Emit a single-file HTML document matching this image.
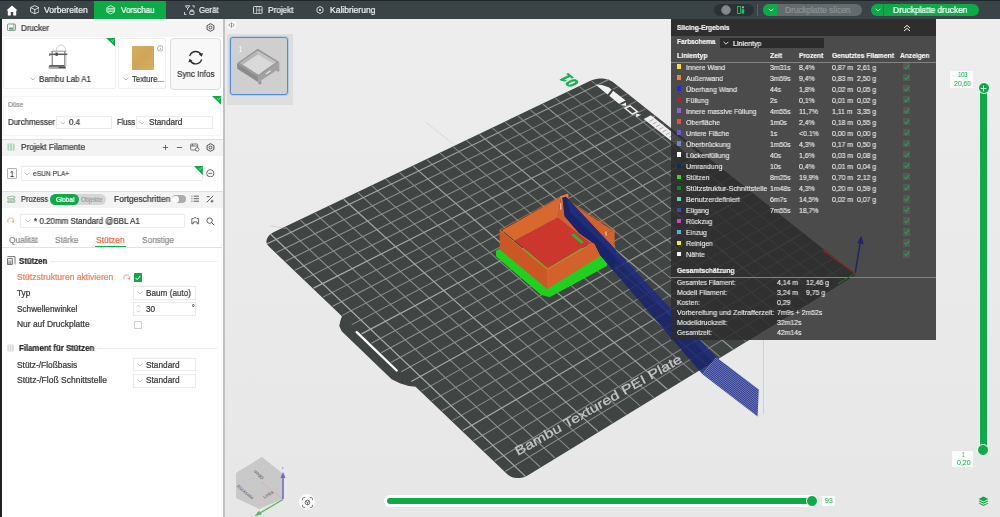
<!DOCTYPE html>
<html><head><meta charset="utf-8"><title>Bambu Studio</title>
<style>
*{box-sizing:border-box;margin:0;padding:0}
html,body{width:1000px;height:517px;overflow:hidden;background:#eaeaea;font-family:"Liberation Sans",sans-serif}
#app{position:relative;width:1000px;height:517px;overflow:hidden;background:linear-gradient(#ededed,#e7e7e7)}
.abs,.t,.sq,.ck,.box{position:absolute}
.t{white-space:pre;transform-origin:left center;letter-spacing:0;will-change:transform;-webkit-text-stroke:.22px currentColor}
.box{border:1px solid #ebebeb;background:#fff}
.sq{left:676.9px;width:4.6px;height:4.6px}
.ck{left:902.6px;width:7.6px;height:7.6px;background:rgba(95,100,96,.55)}
.ck svg{position:absolute;left:0;top:0;width:7.6px;height:7.6px}
svg{display:block}
</style></head><body>
<div id="app">

<!-- ===== 3D canvas ===== -->
<svg class="abs" style="left:0;top:0;filter:blur(.35px)" width="1000" height="517" viewBox="0 0 1000 517">
<defs><linearGradient id="g1" gradientUnits="userSpaceOnUse" x1="330" y1="420" x2="780" y2="140"><stop offset="0" stop-color="#909492"/><stop offset="1" stop-color="#747876"/></linearGradient><linearGradient id="g2" gradientUnits="userSpaceOnUse" x1="330" y1="420" x2="780" y2="140"><stop offset="0" stop-color="#adb0ae"/><stop offset="1" stop-color="#888c8a"/></linearGradient></defs>
<polygon points="854.9,274.0 855.1,274.1 855.3,274.3 855.3,274.5 855.3,274.8 855.3,275.0 855.2,275.2 855.0,275.4 854.8,275.5 528.0,475.3 525.5,476.5 522.8,477.4 519.9,477.9 517.0,478.0 514.2,477.7 511.6,476.9 509.2,475.8 507.3,474.3 415.6,386.7 408.8,385.9 400.4,383.6 391.6,379.3 341.7,331.3 339.3,326.1 340.2,321.4 341.9,316.2 268.7,246.3 267.4,244.7 266.6,242.8 266.4,240.9 266.9,238.9 267.9,236.9 269.5,235.1 271.5,233.5 274.0,232.0 590.4,80.7 593.2,79.7 596.2,79.0 599.4,78.6 602.6,78.6 605.7,79.1 608.7,79.9 611.3,81.0 613.5,82.4" fill="#404443"/>
<path d="M843.2,281.9 L591.5,80.8 M844.3,266.3 L505.4,471.3 M831.5,289.0 L579.5,86.6 M833.7,258.0 L494.6,461.0 M819.6,296.3 L567.4,92.3 M823.3,249.6 L483.9,450.8 M807.6,303.6 L555.2,98.2 M812.9,241.4 L473.3,440.7 M783.2,318.5 L530.4,110.0 M792.3,225.0 L452.3,420.6 M770.8,326.1 L517.9,116.0 M782.1,216.9 L442.0,410.7 M758.4,333.7 L505.2,122.1 M771.9,208.9 L431.7,400.9 M745.7,341.4 L492.5,128.2 M761.8,200.9 L421.4,391.1 M720.1,357.0 L466.6,140.6 M741.9,185.1 L401.2,371.8 M707.1,365.0 L453.4,146.9 M732.0,177.2 L391.2,362.2 M694.0,373.0 L440.2,153.2 M722.2,169.4 L381.2,352.7 M680.7,381.1 L426.8,159.6 M712.4,161.7 L371.4,343.3 M653.8,397.6 L399.6,172.6 M693.0,146.3 L351.8,324.6 M640.1,405.9 L385.8,179.2 M683.4,138.7 L342.2,315.4 M626.3,414.4 L371.9,185.8 M673.9,131.1 L332.6,306.2 M612.3,422.9 L357.9,192.6 M664.4,123.6 L323.0,297.1 M583.9,440.3 L329.4,206.2 M645.7,108.7 L304.1,279.1 M569.5,449.1 L315.0,213.1 M636.4,101.3 L294.8,270.2 M554.9,458.0 L300.4,220.1 M627.1,94.0 L285.5,261.3 M540.1,467.0 L285.6,227.1 M617.9,86.7 L276.3,252.5" stroke="url(#g1)" stroke-width="1.05" fill="none"/>
<path d="M795.5,311.0 L542.9,104.1 M802.5,233.2 L462.8,430.6 M733.0,349.2 L479.6,134.4 M751.8,193.0 L411.3,381.4 M667.3,389.3 L413.3,166.1 M702.7,154.0 L361.6,333.9 M598.2,431.6 L343.7,199.3 M655.0,116.1 L313.5,288.1 M525.2,476.1 L270.7,234.3 M608.8,79.5 L267.2,243.8" stroke="url(#g2)" stroke-width="1.2" fill="none"/>
<line x1="396.7" y1="370.5" x2="356.7" y2="332.2" stroke="#fff" stroke-width="2.4" stroke-linecap="round"/>
<text transform="matrix(1.2802 -0.7316 0.5853 1.1315 517.80 456.06)" font-family="Liberation Sans, sans-serif" font-size="10" textLength="129" lengthAdjust="spacingAndGlyphs" fill="#c4c6c5" stroke="#c4c6c5" stroke-width=".2">Bambu Textured PEI Plate</text>
<text transform="matrix(-0.9062 -0.7270 1.2021 -0.5735 579.99 82.95)" font-family="Liberation Sans, sans-serif" font-weight="700" font-size="12" fill="#10b04c" stroke="#10b04c" stroke-width=".5">01</text>
<polygon points="595.7,84.8 601.9,85.1 608.6,87.2 625.6,100.4 619.0,103.7" fill="#f1f1f1"/>
<polygon points="612.2,88.8 607.1,95.2 608.8,96.5 613.8,90.1" fill="#404443"/>
<polygon points="625.9,102.5 620.9,104.9 626.2,105.9" fill="#f1f1f1"/>
<polygon points="630.1,104.9 623.7,108.1 632.3,114.9 638.7,111.7" fill="#f1f1f1"/>
<polygon points="630.0,106.7 626.4,108.4 632.4,113.2 635.9,111.4" fill="#404443"/>
<polygon points="641.3,114.8 636.3,117.3 636.0,113.8" fill="#f1f1f1"/>
<polygon points="650.9,115.3 643.7,118.9 693.6,158.8 700.8,154.9" fill="#eeeeee"/>
<line x1="653.4" y1="119.4" x2="649.5" y2="121.4" stroke="#777" stroke-width=".6"/>
<line x1="656.7" y1="122.0" x2="652.8" y2="124.0" stroke="#777" stroke-width=".6"/>
<line x1="660.0" y1="124.7" x2="656.1" y2="126.6" stroke="#777" stroke-width=".6"/>
<line x1="663.3" y1="127.3" x2="659.4" y2="129.3" stroke="#777" stroke-width=".6"/>
<line x1="666.6" y1="129.9" x2="662.7" y2="131.9" stroke="#777" stroke-width=".6"/>
<line x1="669.9" y1="132.6" x2="666.0" y2="134.6" stroke="#777" stroke-width=".6"/>
<line x1="673.2" y1="135.2" x2="669.3" y2="137.2" stroke="#777" stroke-width=".6"/>
<line x1="676.6" y1="137.9" x2="672.7" y2="139.9" stroke="#777" stroke-width=".6"/>
<line x1="679.9" y1="140.5" x2="676.0" y2="142.5" stroke="#777" stroke-width=".6"/>
<line x1="683.3" y1="143.2" x2="679.4" y2="145.2" stroke="#777" stroke-width=".6"/>
<line x1="686.6" y1="145.9" x2="682.7" y2="147.9" stroke="#777" stroke-width=".6"/>
<line x1="690.0" y1="148.5" x2="686.1" y2="150.6" stroke="#777" stroke-width=".6"/>
<line x1="693.4" y1="151.2" x2="689.5" y2="153.3" stroke="#777" stroke-width=".6"/>
<defs>
<pattern id="hb" width="1.6" height="1.6" patternUnits="userSpaceOnUse" patternTransform="rotate(38)"><rect width="1.6" height="1.6" fill="#2e3a8e"/><rect width="1.6" height=".55" fill="#8e97cf"/></pattern>
<pattern id="hr" width="1.5" height="1.5" patternUnits="userSpaceOnUse" patternTransform="rotate(-27)"><rect width="1.5" height="1.5" fill="#d43a30"/><rect width="1.5" height=".5" fill="#bd2f28"/></pattern>
<pattern id="ho" width="1.5" height="1.5" patternUnits="userSpaceOnUse" patternTransform="rotate(62)"><rect width="1.5" height="1.5" fill="#da682e"/><rect width="1.5" height=".5" fill="#c45624"/></pattern>
</defs>
<line x1="425.6" y1="122" x2="452.6" y2="143.6" stroke="#b8b8b8" stroke-width=".5" stroke-dasharray="2 1"/>
<line x1="270.5" y1="225.8" x2="286" y2="228.5" stroke="#bdbdbd" stroke-width=".5"/>
<line x1="763.5" y1="338" x2="763.5" y2="414" stroke="#c0c0c0" stroke-width=".6"/>
<polygon points="495.8,250.8 499.7,248.7 549.6,249.6 615.7,246.1 606.5,266.3 549.6,297.2 540.8,294.8 496.2,256.6" fill="#1fd01f"/>
<polygon points="499.7,229.9 547.3,269.3 547.3,289.0 499.7,249.6" fill="#cb5824"/>
<polygon points="547.3,269.3 614.6,229.9 614.6,247.3 547.3,289.0" fill="url(#ho)"/>
<polygon points="502.0,230.3 561.2,196.7 557.7,217.6 514.8,240.8" fill="#d8682e"/>
<polygon points="561.2,196.7 612.7,230.3 589.5,243.8 557.7,217.6" fill="#d2622b"/>
<polygon points="514.8,240.8 557.7,217.6 590.2,243.1 547.7,268.2" fill="url(#hr)"/>
<polyline points="499.7,229.9 547.3,269.3 614.6,229.9" fill="none" stroke="#e67a40" stroke-width=".8"/>
<polyline points="499.7,229.9 561.2,196.2 614.6,229.9" fill="none" stroke="#e0733a" stroke-width=".7"/>
<polygon points="571.0,234.8 574.0,233.4 583.9,242.2 581.2,243.8" fill="#26b82a"/>
<polygon points="560.0,196.2 568.2,193.5 568.6,197.4 561.7,203.2" fill="#e87a44"/>
<rect x="560.3" y="203.2" width="1" height="6.5" fill="#f4d9c8"/>
<rect x="605.5" y="231.5" width="1" height="4" fill="#f4d9c8"/>
<polygon points="562.4,197.8 566.0,196.8 716.0,357.0 702.5,374.3 600.4,255.5 594.7,244.0 579.0,232.9 564.6,216.2" fill="#17226e" fill-opacity=".84"/>
<polygon points="562.4,197.8 566.0,196.8 616.0,250.2 614.0,271.3 600.4,255.5 594.7,244.0 579.0,232.9 564.6,216.2" fill="#1a246a"/>
<polygon points="566.0,196.8 716.0,357.0 712.0,361.5 600.0,241.0 570.0,212.0" fill="#3146a8" fill-opacity=".28"/>
<polygon points="716.0,357.0 758.8,389.5 757.6,416.5 702.5,374.3" fill="url(#hb)"/>
</svg>

<!-- thumbnail strip -->
<div class="abs" style="left:226.5px;top:33.5px;width:66px;height:71.5px;background:#dedede"></div>
<div class="abs" style="left:229.5px;top:36.5px;width:58.5px;height:58.5px;background:#cfcfcf;border:1px solid #4a90e2;border-radius:3px;box-shadow:0 0 0 1px rgba(120,170,230,.35)"></div>
<svg class="abs" style="left:229.5px;top:36.5px" width="59" height="59" viewBox="0 0 59 59">
 <polygon points="7.2,25.9 28.4,40 28.4,45.3 7.2,31.7" fill="#8b8b8b"/>
 <polygon points="28.4,40 49.3,25 49.3,31.6 28.4,45.3" fill="#a2a2a2"/>
 <polygon points="28.4,45 28.4,47.3 31.4,47.3 31.4,43.4" fill="#979797"/>
 <polygon points="47.2,32.6 49.3,31.4 49.3,33.9 47.2,35" fill="#979797"/>
 <polygon points="7.2,25.9 27.7,11.8 49.3,25 28.4,40" fill="#979797"/>
 <polygon points="10.2,25.9 27.7,13.9 46.2,25 28.4,37.8" fill="#d9d9d9"/>
 <polygon points="10.2,25.9 27.7,13.9 27.7,17.4 12.9,27.6" fill="#b4b4b4"/>
 <polygon points="27.7,13.9 46.2,25 43.8,26.7 27.7,17.4" fill="#c2c2c2"/>
 <line x1="36" y1="37" x2="40.6" y2="33.8" stroke="#e6e6e6" stroke-width="1.2"/>
</svg>
<div class="abs" style="left:226.6px;top:20.8px;width:9px;height:8px;background:#f6f6f6;border-radius:1px"></div>
<svg class="abs" style="left:227.6px;top:21.8px" width="7" height="6" viewBox="0 0 7 6"><path d="M3.5 0.3V5.7M2.3 1.3 0.8 3 2.3 4.7M4.7 1.3 6.2 3 4.7 4.7" stroke="#555" stroke-width=".6" fill="none"/></svg>

<!-- nav cube -->
<svg class="abs" style="left:230px;top:452px" width="62" height="65" viewBox="230 452 62 65">
 <polygon points="262,457 282,473 283,499 259,509 236,498 236,473" fill="#c6c6c6" opacity=".92"/>
 <line x1="283" y1="499" x2="283" y2="476" stroke="#7468c6" stroke-width="1.6"/>
 <polygon points="283,472 285.6,478 280.4,478" fill="#7468c6"/>
 <line x1="283" y1="499.5" x2="260" y2="513" stroke="#5dba63" stroke-width="1.4"/>
 <polygon points="254.5,516 259,510.8 262,514.6" fill="#5dba63"/>
 <line x1="261" y1="482" x2="282" y2="498.5" stroke="#e0a8a8" stroke-width=".7"/>
 <g font-family="Liberation Sans, sans-serif" font-size="4.2" fill="#555">
  <text transform="translate(264,477.6) rotate(222)" font-size="4.8">Oben</text>
  <text transform="translate(236.6,486.8) rotate(40)" font-size="4.6">Rückseite</text>
  <text transform="translate(264.6,498.8) rotate(-33)" font-size="4.6">Links</text>
  <text x="281.8" y="468.5" fill="#7468c6" font-size="3.6">z</text>
 </g>
</svg>
<!-- camera btn -->
<div class="abs" style="left:299px;top:494px;width:16px;height:16px;border-radius:8px;background:#fbfbfb"></div>
<svg class="abs" style="left:301.5px;top:496.5px" width="11" height="11" viewBox="0 0 11 11"><g fill="none" stroke="#555" stroke-width=".8"><path d="M0.6 3.2V1.6Q.6.6 1.6.6H3.2M7.8.6H9.4Q10.4.6 10.4 1.6V3.2M10.4 7.8V9.4Q10.4 10.4 9.4 10.4H7.8M3.2 10.4H1.6Q.6 10.4.6 9.4V7.8"/><circle cx="5.5" cy="5.5" r="2.3"/><path d="M5.5 5.5V7.8M5.5 5.5 3.6 4.3M5.5 5.5 7.4 4.3"/></g></svg>

<!-- horizontal slider -->
<div class="abs" style="left:384px;top:495.3px;width:433px;height:11.4px;border-radius:6px;background:#fff"></div>
<div class="abs" style="left:387px;top:498px;width:427px;height:6px;border-radius:3px;background:#0dab47"></div>
<div class="abs" style="left:805.6px;top:495px;width:12px;height:12px;border-radius:6px;background:#0dab47;border:1px solid #f4fff8"></div>
<div class="abs" style="left:822px;top:496px;width:13px;height:10px;background:#fbfbfb"></div>
<!-- vertical slider -->
<div class="abs" style="left:978.6px;top:84px;width:10px;height:370px;border-radius:5px;background:#fff"></div>
<div class="abs" style="left:980.3px;top:86px;width:6.6px;height:366px;background:#0dab47"></div>
<div class="abs" style="left:977.6px;top:82.3px;width:12px;height:12px;border-radius:6px;background:#0dab47;border:1px solid #fbfffc"></div>
<svg class="abs" style="left:980.1px;top:84.8px" width="7" height="7" viewBox="0 0 7 7"><path d="M3.5 .6V6.4M.6 3.5H6.4" stroke="#dfffe9" stroke-width=".9"/></svg>
<div class="abs" style="left:977.4px;top:443.7px;width:12px;height:12px;border-radius:6px;background:#0dab47;border:1px solid #fbfffc"></div>
<div class="abs" style="left:950.2px;top:70.5px;width:23.2px;height:17px;background:#fbfbfb"></div>
<div class="abs" style="left:952px;top:450.6px;width:21.4px;height:16.6px;background:#fbfbfb"></div>
<svg class="abs" style="left:978px;top:496px" width="11" height="11" viewBox="0 0 11 11"><g fill="#0dab47"><path d="M5.5 .4 10.4 2.9 5.5 5.4 .6 2.9Z"/><path d="M1.7 4.6.6 5.2 5.5 7.7 10.4 5.2 9.3 4.6 5.5 6.5Z"/><path d="M1.7 6.9.6 7.5 5.5 10 10.4 7.5 9.3 6.9 5.5 8.8Z"/></g></svg>

<!-- ===== slicing panel ===== -->
<div class="abs" style="left:670.5px;top:19px;width:265.5px;height:321px;background:rgba(44,44,44,.84)"></div>
<div class="abs" style="left:670.5px;top:19px;width:265.5px;height:16.5px;background:rgba(36,36,36,.75)"></div>
<div class="abs" style="left:720.2px;top:38.2px;width:103.6px;height:10.2px;background:rgba(30,30,30,.7)"></div>
<svg class="abs" style="left:722.6px;top:41.4px" width="6" height="4" viewBox="0 0 6 4"><path d="M.6.8 3 3.2 5.4.8" stroke="#f0f0f0" stroke-width=".9" fill="none"/></svg>
<div class="abs" style="left:670.5px;top:61.5px;width:265.5px;height:1px;background:#838383"></div>
<div class="abs" style="left:670.5px;top:276.6px;width:265.5px;height:1px;background:#838383"></div>
<svg class="abs" style="left:902.5px;top:24px" width="8" height="8" viewBox="0 0 8 8"><path d="M1 4 4 1.4 7 4M1 7 4 4.4 7 7" stroke="#f2f2f2" stroke-width="1" fill="none"/></svg>
<i class="sq" style="top:64.2px;background:#f5e03c"></i>
<i class="ck" style="top:62.6px"><svg viewBox="0 0 8 8"><path d="M1.6 4.2 3.3 5.9 6.6 2" stroke="#1fa04e" stroke-width="1.3" fill="none"/></svg></i>
<i class="sq" style="top:75.2px;background:#f58231"></i>
<i class="ck" style="top:73.6px"><svg viewBox="0 0 8 8"><path d="M1.6 4.2 3.3 5.9 6.6 2" stroke="#1fa04e" stroke-width="1.3" fill="none"/></svg></i>
<i class="sq" style="top:86.3px;background:#1f2bd6"></i>
<i class="ck" style="top:84.7px"><svg viewBox="0 0 8 8"><path d="M1.6 4.2 3.3 5.9 6.6 2" stroke="#1fa04e" stroke-width="1.3" fill="none"/></svg></i>
<i class="sq" style="top:97.3px;background:#b0281f"></i>
<i class="ck" style="top:95.7px"><svg viewBox="0 0 8 8"><path d="M1.6 4.2 3.3 5.9 6.6 2" stroke="#1fa04e" stroke-width="1.3" fill="none"/></svg></i>
<i class="sq" style="top:108.3px;background:#8f63c9"></i>
<i class="ck" style="top:106.7px"><svg viewBox="0 0 8 8"><path d="M1.6 4.2 3.3 5.9 6.6 2" stroke="#1fa04e" stroke-width="1.3" fill="none"/></svg></i>
<i class="sq" style="top:119.4px;background:#f04a44"></i>
<i class="ck" style="top:117.8px"><svg viewBox="0 0 8 8"><path d="M1.6 4.2 3.3 5.9 6.6 2" stroke="#1fa04e" stroke-width="1.3" fill="none"/></svg></i>
<i class="sq" style="top:130.4px;background:#6a5acd"></i>
<i class="ck" style="top:128.8px"><svg viewBox="0 0 8 8"><path d="M1.6 4.2 3.3 5.9 6.6 2" stroke="#1fa04e" stroke-width="1.3" fill="none"/></svg></i>
<i class="sq" style="top:141.4px;background:#5b8dc9"></i>
<i class="ck" style="top:139.8px"><svg viewBox="0 0 8 8"><path d="M1.6 4.2 3.3 5.9 6.6 2" stroke="#1fa04e" stroke-width="1.3" fill="none"/></svg></i>
<i class="sq" style="top:152.4px;background:#ffffff"></i>
<i class="ck" style="top:150.8px"><svg viewBox="0 0 8 8"><path d="M1.6 4.2 3.3 5.9 6.6 2" stroke="#1fa04e" stroke-width="1.3" fill="none"/></svg></i>
<i class="sq" style="top:163.5px;background:#0c2f5c"></i>
<i class="ck" style="top:161.9px"><svg viewBox="0 0 8 8"><path d="M1.6 4.2 3.3 5.9 6.6 2" stroke="#1fa04e" stroke-width="1.3" fill="none"/></svg></i>
<i class="sq" style="top:174.5px;background:#22e01e"></i>
<i class="ck" style="top:172.9px"><svg viewBox="0 0 8 8"><path d="M1.6 4.2 3.3 5.9 6.6 2" stroke="#1fa04e" stroke-width="1.3" fill="none"/></svg></i>
<i class="sq" style="top:185.5px;background:#0f8a14"></i>
<i class="ck" style="top:183.9px"><svg viewBox="0 0 8 8"><path d="M1.6 4.2 3.3 5.9 6.6 2" stroke="#1fa04e" stroke-width="1.3" fill="none"/></svg></i>
<i class="sq" style="top:196.6px;background:#63d9a8"></i>
<i class="ck" style="top:195.0px"><svg viewBox="0 0 8 8"><path d="M1.6 4.2 3.3 5.9 6.6 2" stroke="#1fa04e" stroke-width="1.3" fill="none"/></svg></i>
<i class="sq" style="top:207.6px;background:#3c4bb0"></i>
<i class="ck" style="top:206.0px"><svg viewBox="0 0 8 8"><path d="M1.6 4.2 3.3 5.9 6.6 2" stroke="#1fa04e" stroke-width="1.3" fill="none"/></svg></i>
<i class="sq" style="top:218.6px;background:#d63ec9"></i>
<i class="ck" style="top:217.0px"><svg viewBox="0 0 8 8"><path d="M1.6 4.2 3.3 5.9 6.6 2" stroke="#1fa04e" stroke-width="1.3" fill="none"/></svg></i>
<i class="sq" style="top:229.7px;background:#4fb3d9"></i>
<i class="ck" style="top:228.0px"><svg viewBox="0 0 8 8"><path d="M1.6 4.2 3.3 5.9 6.6 2" stroke="#1fa04e" stroke-width="1.3" fill="none"/></svg></i>
<i class="sq" style="top:240.7px;background:#f0ee26"></i>
<i class="ck" style="top:239.1px"><svg viewBox="0 0 8 8"><path d="M1.6 4.2 3.3 5.9 6.6 2" stroke="#1fa04e" stroke-width="1.3" fill="none"/></svg></i>
<i class="sq" style="top:251.7px;background:#f4f4f4"></i>
<i class="ck" style="top:250.1px"><svg viewBox="0 0 8 8"><path d="M1.6 4.2 3.3 5.9 6.6 2" stroke="#1fa04e" stroke-width="1.3" fill="none"/></svg></i>
<svg class="abs" style="left:815px;top:230px" width="55" height="65" viewBox="815 230 55 65">
<line x1="855.2" y1="273.2" x2="860.2" y2="243" stroke="#23236f" stroke-width="1.5"/>
<polygon points="861.2,235.6 863.8,244.2 857.2,243.2" fill="#23236f"/>
<line x1="855.2" y1="273.2" x2="824" y2="251.2" stroke="#8e2424" stroke-width="1.1"/>
<polygon points="822.4,250 826.4,250.9 825,253.2" fill="#8e2424"/>
<line x1="855.2" y1="273.4" x2="838" y2="283.8" stroke="#2c6a2c" stroke-width="1.1"/>
</svg>

<!-- ===== left panel ===== -->
<div class="abs" style="left:0;top:19px;width:223px;height:498px;background:#fff"></div>
<div class="abs" style="left:223px;top:19px;width:2px;height:498px;background:#c2c2c2"></div>
<div class="abs" style="left:0;top:0;width:1.6px;height:517px;background:#1e2223"></div>
<!-- section headers -->
<div class="abs" style="left:1.6px;top:19px;width:221.4px;height:17.5px;background:#f5f5f5"></div>
<div class="abs" style="left:1.6px;top:139px;width:221.4px;height:17px;background:#f3f3f3;border-top:1px solid #dcdcdc"></div>
<div class="abs" style="left:1.6px;top:190.5px;width:221.4px;height:17px;background:#f3f3f3;border-top:1px solid #e0e0e0"></div>
<!-- printer card -->
<div class="box" style="left:2.5px;top:37.6px;width:113px;height:51.4px;border-color:#efefef;border-radius:2px"></div>
<div class="box" style="left:118.2px;top:37.6px;width:48px;height:51.4px;border-color:#efefef;border-radius:2px"></div>
<div class="box" style="left:170.4px;top:38.2px;width:50.3px;height:51.5px;border-color:#dcdcdc;background:#f8f8f8;border-radius:4px"></div>
<svg class="abs" style="left:106.3px;top:38.2px" width="9.2" height="8.8" viewBox="0 0 9.2 8.8"><polygon points="0,0 9.2,0 9.2,8.8" fill="#0dab47"/><path d="M5.2 2.4 6.4 3.6 8.3 1.3" stroke="#c9f5d8" stroke-width=".7" fill="none"/></svg>
<!-- printer icon -->
<svg class="abs" style="left:40px;top:40px" width="40" height="32" viewBox="40 40 40 32">
 <path d="M56.4 51C56.6 43 65.4 43 65.7 51" fill="none" stroke="#9a9a9a" stroke-width=".5"/>
 <path d="M51.5 51.2H65.7" stroke="#6a6a6a" stroke-width=".7"/>
 <path d="M52.2 51V65.4" stroke="#5a5a5a" stroke-width=".9"/>
 <path d="M64.8 51V66.4" stroke="#8a8a8a" stroke-width="1.3"/>
 <path d="M66.3 55V66" stroke="#c4c4c4" stroke-width=".6"/>
 <path d="M49.3 54.3H67.3" stroke="#5c5c5c" stroke-width="1.5"/>
 <rect x="49" y="53.4" width="1.2" height="2.6" fill="#777"/>
 <rect x="55.4" y="52.6" width="2.4" height="3.2" fill="#4a4a4a"/>
 <path d="M49.2 65.2H63.8L65.8 66.6V68.2H48.6V66.4Z" fill="#b4b4b4"/>
 <path d="M49.6 65.3H63.6L65.4 66.6H48.8Z" fill="#3c3c3c"/>
 <path d="M58.6 66.9H65.6V68.2H58.6Z" fill="#444"/>
 <path d="M48.6 68.2H65.8" stroke="#6c6c6c" stroke-width=".6"/>
</svg>
<svg class="abs" style="left:29.8px;top:77.3px" width="6" height="4" viewBox="0 0 6 4"><path d="M.6.7 3 3 5.4.7" stroke="#9a9a9a" stroke-width=".7" fill="none"/></svg>
<!-- plate image -->
<div class="abs" style="left:132px;top:46.4px;width:22px;height:24px;background:linear-gradient(135deg,#d4ad62,#cfa558 50%,#d6b066);border-radius:1px"></div>
<svg class="abs" style="left:156.5px;top:45.4px" width="6.6" height="6.6" viewBox="0 0 6.6 6.6"><circle cx="3.3" cy="3.3" r="2.8" fill="none" stroke="#777" stroke-width=".55"/><path d="M3.3 2.9V4.8M3.3 1.7V2.2" stroke="#777" stroke-width=".6"/></svg>
<svg class="abs" style="left:122.8px;top:77.3px" width="6" height="4" viewBox="0 0 6 4"><path d="M.6.7 3 3 5.4.7" stroke="#9a9a9a" stroke-width=".7" fill="none"/></svg>
<!-- sync icon -->
<svg class="abs" style="left:187px;top:49.2px" width="17.4" height="17.4" viewBox="0 0 14 14"><g fill="none" stroke="#2e2e2e" stroke-width="1.1"><path d="M2.2 5.6A5 5 0 0 1 11.4 4.6"/><path d="M11.8 8.4A5 5 0 0 1 2.6 9.4"/></g><path d="M12.9 3.2 11.9 6.2 9.4 4.3Z" fill="#2e2e2e"/><path d="M1.1 10.8 2.1 7.8 4.6 9.7Z" fill="#2e2e2e"/></svg>
<!-- Drucker header icons -->
<svg class="abs" style="left:7px;top:23px" width="9" height="8.4" viewBox="0 0 9 8.4"><rect x=".5" y="1" width="8" height="6.6" rx="1" fill="none" stroke="#6a6a6a" stroke-width=".7"/><rect x="2" y="4.6" width="4" height="2" fill="#37b26a"/><path d="M6.8 1V7.6" stroke="#6a6a6a" stroke-width=".6"/></svg>
<svg class="abs" style="left:206px;top:23px" width="9" height="9" viewBox="0 0 9 9"><path d="M4.5 .7 7.9 2.6V6.4L4.5 8.3 1.1 6.4V2.6Z" fill="none" stroke="#3c3c3c" stroke-width=".9" stroke-linejoin="round"/><circle cx="4.5" cy="4.5" r="1.45" fill="none" stroke="#3c3c3c" stroke-width=".85"/></svg>
<!-- nozzle box -->
<div class="box" style="left:2.5px;top:95.5px;width:218.5px;height:40px;border-color:#f5f5f5;border-radius:2px"></div>
<svg class="abs" style="left:211.6px;top:96.2px" width="9.4" height="9.2" viewBox="0 0 9.4 9.2"><polygon points="0,0 9.4,0 9.4,9.2" fill="#0dab47"/><path d="M5.4 2.5 6.6 3.7 8.5 1.4" stroke="#c9f5d8" stroke-width=".7" fill="none"/></svg>
<div class="box" style="left:56.2px;top:116px;width:55.5px;height:13px"></div>
<div class="box" style="left:136px;top:116px;width:76.5px;height:13px"></div>
<svg class="abs" style="left:60.4px;top:120.6px" width="6" height="4" viewBox="0 0 6 4"><path d="M.6.7 3 3 5.4.7" stroke="#a8a8a8" stroke-width=".7" fill="none"/></svg>
<svg class="abs" style="left:139.2px;top:120.6px" width="6" height="4" viewBox="0 0 6 4"><path d="M.6.7 3 3 5.4.7" stroke="#a8a8a8" stroke-width=".7" fill="none"/></svg>
<!-- filament header icons -->
<svg class="abs" style="left:7.4px;top:143px" width="8" height="8.4" viewBox="0 0 8 8.4"><rect x=".4" y=".6" width="7.2" height="7.2" rx="1" fill="#a9d9bd"/><path d="M2.6.6V7.8M5.4.6V7.8" stroke="#f2f2f2" stroke-width=".8"/></svg>
<svg class="abs" style="left:161.8px;top:143.8px" width="7" height="7" viewBox="0 0 7 7"><path d="M3.5.9V6.1M.9 3.5H6.1" stroke="#555" stroke-width=".85"/></svg>
<svg class="abs" style="left:176.4px;top:143.8px" width="7" height="7" viewBox="0 0 7 7"><path d="M.8 3.5H6.2" stroke="#555" stroke-width=".85"/></svg>
<svg class="abs" style="left:190px;top:142.6px" width="9.6" height="9" viewBox="0 0 9.6 9"><g fill="none" stroke="#555" stroke-width=".75"><rect x=".6" y="1" width="7" height="6" rx=".8"/><path d="M.6 3H7.6M2.6 1V3"/><circle cx="7.2" cy="6.4" r="1.8" fill="#f3f3f3"/></g></svg>
<svg class="abs" style="left:205.8px;top:142.6px" width="9" height="9" viewBox="0 0 9 9"><path d="M4.5 .7 7.9 2.6V6.4L4.5 8.3 1.1 6.4V2.6Z" fill="none" stroke="#3c3c3c" stroke-width=".9" stroke-linejoin="round"/><circle cx="4.5" cy="4.5" r="1.45" fill="none" stroke="#3c3c3c" stroke-width=".85"/></svg>
<!-- filament row -->
<div class="box" style="left:6.9px;top:168px;width:10.4px;height:10.8px;border-color:#b4b4b4;border-radius:1px"></div>
<div class="box" style="left:20.8px;top:165.7px;width:182px;height:15.2px;border-radius:1px"></div>
<svg class="abs" style="left:194px;top:165.7px" width="8.8" height="9.3" viewBox="0 0 8.8 9.3"><polygon points="0,0 8.8,0 8.8,9.3" fill="#0dab47"/><path d="M5 2.5 6.2 3.7 8 1.4" stroke="#c9f5d8" stroke-width=".7" fill="none"/></svg>
<svg class="abs" style="left:24px;top:171.6px" width="6" height="4" viewBox="0 0 6 4"><path d="M.6.7 3 3 5.4.7" stroke="#a8a8a8" stroke-width=".7" fill="none"/></svg>
<svg class="abs" style="left:206px;top:168.8px" width="8.6" height="8.6" viewBox="0 0 8.6 8.6"><circle cx="4.3" cy="4.3" r="3.6" fill="none" stroke="#444" stroke-width=".8"/><path d="M2.3 4.3H6.3" stroke="#444" stroke-width=".8"/></svg>
<!-- process header -->
<svg class="abs" style="left:7px;top:194.8px" width="8.6" height="8.6" viewBox="0 0 8.6 8.6"><g fill="none" stroke="#7aa48a" stroke-width=".7"><path d="M.6 2.2 5.4 1 8 1.8V3L3 4 .6 3.4Z"/><path d="M.6 4.6 3 5.3 8 4.2M.6 6 3 6.8 8 5.6V7L3 8 .6 7.2Z"/></g></svg>
<div class="abs" style="left:50px;top:194px;width:55.7px;height:10.7px;border-radius:5.4px;background:#d6d6d6"></div>
<div class="abs" style="left:50px;top:194px;width:28.6px;height:10.7px;border-radius:5.4px;background:#0dab47"></div>
<div class="abs" style="left:171.6px;top:195.3px;width:14.5px;height:8.2px;border-radius:4.1px;background:#ababab"></div>
<div class="abs" style="left:172.3px;top:196px;width:6.8px;height:6.8px;border-radius:3.4px;background:#fff"></div>
<svg class="abs" style="left:191.4px;top:195.4px" width="8.4" height="7.4" viewBox="0 0 8.4 7.4"><path d="M2.6 1.2H8M2.6 3.7H8M2.6 6.2H8" stroke="#444" stroke-width=".85"/><path d="M.4 1.2H1.4M.4 3.7H1.4M.4 6.2H1.4" stroke="#444" stroke-width=".85"/></svg>
<svg class="abs" style="left:206.4px;top:195px" width="8" height="8" viewBox="0 0 8 8"><path d="M.8 7.2 7.2.8M.8 1.6H3.6M4.6 6.2H7.4M6 4.8V7.6" stroke="#444" stroke-width=".85" fill="none"/></svg>
<!-- process preset row -->
<svg class="abs" style="left:7px;top:217.4px" width="7.6" height="7.6" viewBox="0 0 7.6 7.6"><path d="M1.2 5.4A3 3 0 1 1 6.4 5.2" fill="none" stroke="#f0876a" stroke-width=".8"/><path d="M6.9 3.6 6.6 5.9 4.8 4.6Z" fill="#f0876a"/></svg>
<div class="box" style="left:20.1px;top:213.8px;width:164.7px;height:13.8px;border-radius:1px"></div>
<svg class="abs" style="left:24.6px;top:219.2px" width="6" height="4" viewBox="0 0 6 4"><path d="M.6.7 3 3 5.4.7" stroke="#a8a8a8" stroke-width=".7" fill="none"/></svg>
<svg class="abs" style="left:191.4px;top:217px" width="8.4" height="8" viewBox="0 0 8.4 8"><path d="M.8 1.6H2.4L3.2.8H5.2L6 1.6H7.6V6.8H6.2V5H2.2V6.8H.8Z" fill="none" stroke="#444" stroke-width=".8"/></svg>
<svg class="abs" style="left:206px;top:216.6px" width="9" height="9" viewBox="0 0 9 9"><circle cx="3.6" cy="3.6" r="2.7" fill="none" stroke="#444" stroke-width=".85"/><path d="M5.6 5.6 8.3 8.3" stroke="#444" stroke-width=".95"/></svg>
<!-- tabs -->
<div class="abs" style="left:2px;top:247px;width:220px;height:.8px;background:#e2e2e2"></div>
<div class="abs" style="left:95.2px;top:245.7px;width:31px;height:1.6px;background:#0dab47"></div>
<!-- Stützen group -->
<svg class="abs" style="left:7.4px;top:256.4px" width="8.6" height="9" viewBox="0 0 8.6 9"><g fill="none" stroke="#444" stroke-width=".75"><path d="M.5.6H8V8.4"/><path d="M.5 2.6H5.4V8.4H.5Z"/><path d="M2 4.4V8.4M3.8 4.4V8.4"/></g></svg>
<div class="abs" style="left:50px;top:261px;width:167px;height:.7px;background:#ededed"></div>
<svg class="abs" style="left:123.4px;top:273.8px" width="7.6" height="7.6" viewBox="0 0 7.6 7.6"><path d="M1.2 5.4A3 3 0 1 1 6.4 5.2" fill="none" stroke="#f0876a" stroke-width=".8"/><path d="M6.9 3.6 6.6 5.9 4.8 4.6Z" fill="#f0876a"/></svg>
<div class="abs" style="left:133.9px;top:273.2px;width:8.5px;height:8.8px;background:#0dab47;border-radius:.6px"></div>
<svg class="abs" style="left:134.4px;top:274px" width="7.6" height="7.6" viewBox="0 0 7.6 7.6"><path d="M1.5 3.9 3.2 5.6 6.3 2" stroke="#fff" stroke-width="1" fill="none"/></svg>
<div class="box" style="left:133.3px;top:286.4px;width:63.2px;height:13.8px"></div>
<div class="box" style="left:133.3px;top:302.1px;width:63.2px;height:13.6px"></div>
<svg class="abs" style="left:137px;top:291.4px" width="6" height="4" viewBox="0 0 6 4"><path d="M.6.7 3 3 5.4.7" stroke="#a8a8a8" stroke-width=".7" fill="none"/></svg>
<svg class="abs" style="left:136.2px;top:304.4px" width="5" height="9" viewBox="0 0 5 9"><path d="M.6 2.8 2.5.9 4.4 2.8M.6 6.2 2.5 8.1 4.4 6.2" stroke="#b0b0b0" stroke-width=".65" fill="none"/></svg>
<div class="box" style="left:133.9px;top:321px;width:8.5px;height:8.4px;border-color:#cfcfcf;border-radius:.6px"></div>
<!-- Filament group -->
<svg class="abs" style="left:7.4px;top:344.2px" width="7" height="8" viewBox="0 0 7 8"><rect x=".4" y=".6" width="6.2" height="6.8" rx="1" fill="#d6d6d6"/><path d="M2.2.6V7.4M4.6.6V7.4" stroke="#fafafa" stroke-width=".8"/></svg>
<div class="abs" style="left:96.5px;top:348.2px;width:120.5px;height:.7px;background:#ededed"></div>
<div class="box" style="left:133.3px;top:358.3px;width:63.2px;height:13.2px"></div>
<div class="box" style="left:133.3px;top:374px;width:63.2px;height:13.6px"></div>
<svg class="abs" style="left:137px;top:363.2px" width="6" height="4" viewBox="0 0 6 4"><path d="M.6.7 3 3 5.4.7" stroke="#a8a8a8" stroke-width=".7" fill="none"/></svg>
<svg class="abs" style="left:137px;top:378.8px" width="6" height="4" viewBox="0 0 6 4"><path d="M.6.7 3 3 5.4.7" stroke="#a8a8a8" stroke-width=".7" fill="none"/></svg>

<!-- ===== top bar ===== -->
<div class="abs" style="left:0;top:0;width:1000px;height:19.2px;background:#3a4345"></div>
<div class="abs" style="left:0;top:0;width:1000px;height:1.4px;background:#20272a"></div>
<div class="abs" style="left:94px;top:1px;width:72px;height:18.2px;background:#0dab47"></div>
<!-- home -->
<svg class="abs" style="left:6px;top:4.6px" width="12" height="11" viewBox="0 0 12 11"><path d="M6 .4.4 5.4H1.8V10.4H4.8V7H7.2V10.4H10.2V5.4H11.6Z" fill="#fff"/></svg>
<!-- prepare cube -->
<svg class="abs" style="left:29.6px;top:5.4px" width="9.6" height="9.4" viewBox="0 0 9.6 9.4"><path d="M4.8.6 9 2.6V6.8L4.8 8.8.6 6.8V2.6ZM.6 2.6 4.8 4.6 9 2.6M4.8 4.6V8.8" fill="none" stroke="#eef0f0" stroke-width=".85"/></svg>
<!-- preview icon -->
<svg class="abs" style="left:106.2px;top:5.2px" width="9.4" height="9.6" viewBox="0 0 9.4 9.6"><g fill="none" stroke="#e4f8ec" stroke-width=".85"><path d="M4.7.6 8.6 2.7V6.9L4.7 9 .8 6.9V2.7Z"/><path d="M1.4 3.4H8M.9 4.9H8.5M1.4 6.4H8" stroke-width=".8"/></g></svg>
<!-- device icon -->
<svg class="abs" style="left:183.6px;top:4.8px" width="11" height="10.6" viewBox="0 0 11 10.6"><g fill="none" stroke="#eef0f0" stroke-width=".85"><path d="M1.4.8H5.8L3.6 3.6ZM3.6 3.6V5"/><path d="M.6 7V9.6H2.4M8.4.8H10.2V2.6"/><rect x="5.8" y="6.2" width="4.2" height="3.4" rx=".6"/><path d="M6.8 6.2V5H9V6.2"/></g></svg>
<!-- project icon -->
<svg class="abs" style="left:253px;top:6px" width="9.6" height="8.2" viewBox="0 0 9.6 8.2"><g fill="none" stroke="#eef0f0" stroke-width=".85"><rect x=".5" y=".5" width="8.6" height="7.2" rx=".8"/><path d="M3.6.5V7.7M6.2.5V7.7" stroke-width=".6"/><path d="M3.6 4.1H9.1" stroke-width=".6"/></g></svg>
<!-- calibration icon -->
<svg class="abs" style="left:315.6px;top:6px" width="8" height="8" viewBox="0 0 8 8"><path d="M4 .5 7 2.2V5.8L4 7.5 1 5.8V2.2Z" fill="none" stroke="#eef0f0" stroke-width=".85"/><circle cx="4" cy="4" r="1.1" fill="#eef0f0"/></svg>
<!-- right pill -->
<div class="abs" style="left:714px;top:4px;width:40.4px;height:12px;border-radius:6px;background:#2a3234"></div>
<svg class="abs" style="left:721px;top:5px" width="10" height="10" viewBox="0 0 10 10"><g fill="none" stroke="#9aa0a0" stroke-width=".6"><circle cx="5" cy="5" r="4.4" fill="#70787a"/><circle cx="5" cy="5" r="3.2"/><circle cx="5" cy="5" r="2"/><circle cx="5" cy="5" r=".8"/></g></svg>
<svg class="abs" style="left:737.4px;top:6px" width="8" height="8" viewBox="0 0 8 8"><rect x=".5" y=".5" width="3" height="7" fill="none" stroke="#27c060" stroke-width=".9"/><rect x="4.6" y="3.2" width="2.6" height="4.4" fill="#27c060"/><rect x="4.8" y=".3" width="2.2" height="2" fill="#b48ae8"/></svg>
<div class="abs" style="left:757.3px;top:4px;width:.7px;height:12px;background:#566062"></div>
<!-- slice button -->
<div class="abs" style="left:763.2px;top:4px;width:99.2px;height:12px;border-radius:6px;background:#636b6c;overflow:hidden"><div style="width:13.6px;height:12px;background:#0dab47"></div></div>
<svg class="abs" style="left:767.6px;top:8px" width="6" height="4" viewBox="0 0 6 4"><path d="M.7.8 3 3 5.3.8" stroke="#eafff1" stroke-width=".9" fill="none"/></svg>
<!-- print button -->
<div class="abs" style="left:870.9px;top:4px;width:108.6px;height:12px;border-radius:6px;background:#0dab47"></div>
<div class="abs" style="left:883.3px;top:4px;width:.7px;height:12px;background:#09913b"></div>
<svg class="abs" style="left:875px;top:8px" width="6" height="4" viewBox="0 0 6 4"><path d="M.7.8 3 3 5.3.8" stroke="#eafff1" stroke-width=".9" fill="none"/></svg>

<span class="t" style="left:44.3px;top:5.36px;font-size:8.5px;line-height:10.20px;color:#eef0f0;font-weight:400;transform:scaleX(1.005);">Vorbereiten</span>
<span class="t" style="left:121.2px;top:5.36px;font-size:8.5px;line-height:10.20px;color:#fff;font-weight:400;transform:scaleX(0.948);">Vorschau</span>
<span class="t" style="left:199.3px;top:5.36px;font-size:8.5px;line-height:10.20px;color:#eef0f0;font-weight:400;transform:scaleX(0.917);">Gerät</span>
<span class="t" style="left:268.0px;top:5.36px;font-size:8.5px;line-height:10.20px;color:#eef0f0;font-weight:400;transform:scaleX(0.967);">Projekt</span>
<span class="t" style="left:329.9px;top:5.36px;font-size:8.5px;line-height:10.20px;color:#eef0f0;font-weight:400;transform:scaleX(0.998);">Kalibrierung</span>
<span class="t" style="left:785.3px;top:5.36px;font-size:8.5px;line-height:10.20px;color:#8f9596;font-weight:400;transform:scaleX(0.975);">Druckplatte slicen</span>
<span class="t" style="left:892.8px;top:5.36px;font-size:8.5px;line-height:10.20px;color:#fff;font-weight:400;transform:scaleX(0.984);">Druckplatte drucken</span>
<span class="t" style="left:20.8px;top:22.66px;font-size:8.5px;line-height:10.20px;color:#363636;font-weight:400;transform:scaleX(0.941);">Drucker</span>
<span class="t" style="left:38.7px;top:74.73px;font-size:8.2px;line-height:9.84px;color:#363636;font-weight:400;transform:scaleX(0.966);">Bambu Lab A1</span>
<span class="t" style="left:132.0px;top:74.73px;font-size:8.2px;line-height:9.84px;color:#363636;font-weight:400;transform:scaleX(0.950);">Texture...</span>
<span class="t" style="left:176.7px;top:69.16px;font-size:8.5px;line-height:10.20px;color:#363636;font-weight:400;transform:scaleX(0.945);">Sync Infos</span>
<span class="t" style="left:7.8px;top:100.61px;font-size:7.0px;line-height:8.40px;color:#8c8c8c;font-weight:400;transform:scaleX(0.948);">Düse</span>
<span class="t" style="left:7.8px;top:117.36px;font-size:8.5px;line-height:10.20px;color:#363636;font-weight:400;transform:scaleX(0.928);">Durchmesser</span>
<span class="t" style="left:69.0px;top:117.53px;font-size:8.2px;line-height:9.84px;color:#363636;font-weight:400;transform:scaleX(0.966);">0.4</span>
<span class="t" style="left:116.5px;top:117.36px;font-size:8.5px;line-height:10.20px;color:#363636;font-weight:400;transform:scaleX(0.901);">Fluss</span>
<span class="t" style="left:148.6px;top:117.53px;font-size:8.2px;line-height:9.84px;color:#363636;font-weight:400;transform:scaleX(1.005);">Standard</span>
<span class="t" style="left:20.8px;top:142.45px;font-size:8.5px;line-height:10.20px;color:#363636;font-weight:400;transform:scaleX(0.969);">Projekt Filamente</span>
<span class="t" style="left:10.0px;top:168.66px;font-size:8.5px;line-height:10.20px;color:#2a2a2a;font-weight:400;transform:scaleX(0.845);">1</span>
<span class="t" style="left:33.0px;top:170.01px;font-size:7.0px;line-height:8.40px;color:#4a4a4a;font-weight:400;transform:scaleX(0.954);">eSUN PLA+</span>
<span class="t" style="left:20.8px;top:194.35px;font-size:8.5px;line-height:10.20px;color:#363636;font-weight:400;transform:scaleX(0.879);">Prozess</span>
<span class="t" style="left:55.7px;top:195.52px;font-size:6.8px;line-height:8.16px;color:#fff;font-weight:400;transform:scaleX(0.931);">Global</span>
<span class="t" style="left:80.5px;top:195.52px;font-size:6.8px;line-height:8.16px;color:#9c9c9c;font-weight:400;transform:scaleX(0.917);">Objekte</span>
<span class="t" style="left:113.8px;top:194.35px;font-size:8.5px;line-height:10.20px;color:#363636;font-weight:400;transform:scaleX(0.993);">Fortgeschritten</span>
<span class="t" style="left:33.7px;top:216.63px;font-size:8.2px;line-height:9.84px;color:#363636;font-weight:400;transform:scaleX(0.979);">* 0.20mm Standard @BBL A1</span>
<span class="t" style="left:9.0px;top:235.16px;font-size:8.5px;line-height:10.20px;color:#8a8a8a;font-weight:400;transform:scaleX(0.980);">Qualität</span>
<span class="t" style="left:55.3px;top:235.16px;font-size:8.5px;line-height:10.20px;color:#8a8a8a;font-weight:400;transform:scaleX(0.964);">Stärke</span>
<span class="t" style="left:96.2px;top:235.16px;font-size:8.5px;line-height:10.20px;color:#ee6a45;font-weight:400;transform:scaleX(0.992);">Stützen</span>
<span class="t" style="left:142.3px;top:235.16px;font-size:8.5px;line-height:10.20px;color:#8a8a8a;font-weight:400;transform:scaleX(0.970);">Sonstige</span>
<span class="t" style="left:18.9px;top:256.53px;font-size:8.2px;line-height:9.84px;color:#262626;font-weight:700;transform:scaleX(0.957);">Stützen</span>
<span class="t" style="left:17.4px;top:273.13px;font-size:8.2px;line-height:9.84px;color:#f0825f;font-weight:400;transform:scaleX(1.043);">Stützstrukturen aktivieren</span>
<span class="t" style="left:17.4px;top:288.83px;font-size:8.2px;line-height:9.84px;color:#363636;font-weight:400;transform:scaleX(1.015);">Typ</span>
<span class="t" style="left:17.4px;top:304.53px;font-size:8.2px;line-height:9.84px;color:#363636;font-weight:400;transform:scaleX(1.004);">Schwellenwinkel</span>
<span class="t" style="left:17.4px;top:320.23px;font-size:8.2px;line-height:9.84px;color:#363636;font-weight:400;transform:scaleX(1.029);">Nur auf Druckplatte</span>
<span class="t" style="left:146.2px;top:288.83px;font-size:8.2px;line-height:9.84px;color:#363636;font-weight:400;transform:scaleX(0.996);">Baum (auto)</span>
<span class="t" style="left:146.2px;top:304.53px;font-size:8.2px;line-height:9.84px;color:#363636;font-weight:400;transform:scaleX(0.999);">30</span>
<span class="t" style="left:191.5px;top:303.71px;font-size:7.0px;line-height:8.40px;color:#363636;font-weight:400;transform:scaleX(0.889);">°</span>
<span class="t" style="left:18.9px;top:343.73px;font-size:8.2px;line-height:9.84px;color:#262626;font-weight:700;transform:scaleX(0.955);">Filament für Stützen</span>
<span class="t" style="left:17.4px;top:360.53px;font-size:8.2px;line-height:9.84px;color:#363636;font-weight:400;transform:scaleX(1.019);">Stütz-/Floßbasis</span>
<span class="t" style="left:17.4px;top:376.13px;font-size:8.2px;line-height:9.84px;color:#363636;font-weight:400;transform:scaleX(1.040);">Stütz-/Floß Schnittstelle</span>
<span class="t" style="left:145.8px;top:360.53px;font-size:8.2px;line-height:9.84px;color:#363636;font-weight:400;transform:scaleX(1.011);">Standard</span>
<span class="t" style="left:145.8px;top:376.13px;font-size:8.2px;line-height:9.84px;color:#363636;font-weight:400;transform:scaleX(1.011);">Standard</span>
<span class="t" style="left:957.5px;top:71.21px;font-size:7.0px;line-height:8.40px;color:#0fae4b;font-weight:400;transform:scaleX(0.813);-webkit-text-stroke-width:.05px;">103</span>
<span class="t" style="left:954.0px;top:79.51px;font-size:7.0px;line-height:8.40px;color:#0fae4b;font-weight:400;transform:scaleX(0.970);-webkit-text-stroke-width:.05px;">20,60</span>
<span class="t" style="left:962.0px;top:451.21px;font-size:7.0px;line-height:8.40px;color:#0fae4b;font-weight:400;transform:scaleX(0.640);-webkit-text-stroke-width:.05px;">1</span>
<span class="t" style="left:956.5px;top:459.21px;font-size:7.0px;line-height:8.40px;color:#0fae4b;font-weight:400;transform:scaleX(0.991);-webkit-text-stroke-width:.05px;">0,20</span>
<span class="t" style="left:825.0px;top:497.21px;font-size:7.0px;line-height:8.40px;color:#0fae4b;font-weight:400;transform:scaleX(0.962);-webkit-text-stroke-width:.05px;">93</span>
<span class="t" style="left:238.5px;top:43.57px;font-size:9.0px;line-height:10.80px;color:#f2f2f2;font-weight:400;transform:scaleX(0.598);">1</span>
<span class="t" style="left:676.5px;top:23.78px;font-size:7.4px;line-height:8.88px;color:#f3f3f3;font-weight:700;transform:scaleX(0.900);">Slicing-Ergebnis</span>
<span class="t" style="left:676.5px;top:38.40px;font-size:7.2px;line-height:8.64px;color:#f3f3f3;font-weight:700;transform:scaleX(0.909);">Farbschema</span>
<span class="t" style="left:733.0px;top:39.90px;font-size:7.2px;line-height:8.64px;color:#f3f3f3;font-weight:400;transform:scaleX(0.983);">Linientyp</span>
<span class="t" style="left:676.5px;top:51.60px;font-size:7.2px;line-height:8.64px;color:#f3f3f3;font-weight:700;transform:scaleX(0.955);">Linientyp</span>
<span class="t" style="left:769.8px;top:51.60px;font-size:7.2px;line-height:8.64px;color:#f3f3f3;font-weight:700;transform:scaleX(0.939);">Zeit</span>
<span class="t" style="left:799.1px;top:51.60px;font-size:7.2px;line-height:8.64px;color:#f3f3f3;font-weight:700;transform:scaleX(0.922);">Prozent</span>
<span class="t" style="left:831.6px;top:51.60px;font-size:7.2px;line-height:8.64px;color:#f3f3f3;font-weight:700;transform:scaleX(0.934);">Genutztes Filament</span>
<span class="t" style="left:900.1px;top:51.60px;font-size:7.2px;line-height:8.64px;color:#f3f3f3;font-weight:700;transform:scaleX(0.920);">Anzeigen</span>
<span class="t" style="left:685.8px;top:63.70px;font-size:7.2px;line-height:8.64px;color:#f3f3f3;font-weight:400;transform:scaleX(0.954);-webkit-text-stroke-width:.1px;">Innere Wand</span>
<span class="t" style="left:685.8px;top:74.73px;font-size:7.2px;line-height:8.64px;color:#f3f3f3;font-weight:400;transform:scaleX(0.965);-webkit-text-stroke-width:.1px;">Außenwand</span>
<span class="t" style="left:685.8px;top:85.76px;font-size:7.2px;line-height:8.64px;color:#f3f3f3;font-weight:400;transform:scaleX(0.983);-webkit-text-stroke-width:.1px;">Überhang Wand</span>
<span class="t" style="left:685.8px;top:96.79px;font-size:7.2px;line-height:8.64px;color:#f3f3f3;font-weight:400;transform:scaleX(0.967);-webkit-text-stroke-width:.1px;">Füllung</span>
<span class="t" style="left:685.8px;top:107.82px;font-size:7.2px;line-height:8.64px;color:#f3f3f3;font-weight:400;transform:scaleX(0.949);-webkit-text-stroke-width:.1px;">Innere massive Füllung</span>
<span class="t" style="left:685.8px;top:118.85px;font-size:7.2px;line-height:8.64px;color:#f3f3f3;font-weight:400;transform:scaleX(0.964);-webkit-text-stroke-width:.1px;">Oberfläche</span>
<span class="t" style="left:685.8px;top:129.88px;font-size:7.2px;line-height:8.64px;color:#f3f3f3;font-weight:400;transform:scaleX(0.954);-webkit-text-stroke-width:.1px;">Untere Fläche</span>
<span class="t" style="left:685.8px;top:140.91px;font-size:7.2px;line-height:8.64px;color:#f3f3f3;font-weight:400;transform:scaleX(0.985);-webkit-text-stroke-width:.1px;">Überbrückung</span>
<span class="t" style="left:685.8px;top:151.94px;font-size:7.2px;line-height:8.64px;color:#f3f3f3;font-weight:400;transform:scaleX(0.981);-webkit-text-stroke-width:.1px;">Lückenfüllung</span>
<span class="t" style="left:685.8px;top:162.97px;font-size:7.2px;line-height:8.64px;color:#f3f3f3;font-weight:400;transform:scaleX(0.974);-webkit-text-stroke-width:.1px;">Umrandung</span>
<span class="t" style="left:685.8px;top:174.00px;font-size:7.2px;line-height:8.64px;color:#f3f3f3;font-weight:400;transform:scaleX(0.960);-webkit-text-stroke-width:.1px;">Stützen</span>
<span class="t" style="left:685.8px;top:185.03px;font-size:7.2px;line-height:8.64px;color:#f3f3f3;font-weight:400;transform:scaleX(0.998);-webkit-text-stroke-width:.1px;">Stützstruktur-Schnittstelle</span>
<span class="t" style="left:685.8px;top:196.06px;font-size:7.2px;line-height:8.64px;color:#f3f3f3;font-weight:400;transform:scaleX(0.990);-webkit-text-stroke-width:.1px;">Benutzerdefiniert</span>
<span class="t" style="left:685.8px;top:207.09px;font-size:7.2px;line-height:8.64px;color:#f3f3f3;font-weight:400;transform:scaleX(0.951);-webkit-text-stroke-width:.1px;">Eilgang</span>
<span class="t" style="left:685.8px;top:218.12px;font-size:7.2px;line-height:8.64px;color:#f3f3f3;font-weight:400;transform:scaleX(0.937);-webkit-text-stroke-width:.1px;">Rückzug</span>
<span class="t" style="left:685.8px;top:229.15px;font-size:7.2px;line-height:8.64px;color:#f3f3f3;font-weight:400;transform:scaleX(0.942);-webkit-text-stroke-width:.1px;">Einzug</span>
<span class="t" style="left:685.8px;top:240.18px;font-size:7.2px;line-height:8.64px;color:#f3f3f3;font-weight:400;transform:scaleX(0.944);-webkit-text-stroke-width:.1px;">Reinigen</span>
<span class="t" style="left:685.8px;top:251.21px;font-size:7.2px;line-height:8.64px;color:#f3f3f3;font-weight:400;transform:scaleX(0.975);-webkit-text-stroke-width:.1px;">Nähte</span>
<span class="t" style="left:676.5px;top:266.80px;font-size:7.2px;line-height:8.64px;color:#f3f3f3;font-weight:700;transform:scaleX(0.929);">Gesamtschätzung</span>
<span class="t" style="left:676.7px;top:279.10px;font-size:7.2px;line-height:8.64px;color:#f3f3f3;font-weight:400;transform:scaleX(0.913);-webkit-text-stroke-width:.1px;">Gesamtes Filament:</span>
<span class="t" style="left:676.7px;top:289.03px;font-size:7.2px;line-height:8.64px;color:#f3f3f3;font-weight:400;transform:scaleX(0.952);-webkit-text-stroke-width:.1px;">Modell Filament:</span>
<span class="t" style="left:676.7px;top:298.96px;font-size:7.2px;line-height:8.64px;color:#f3f3f3;font-weight:400;transform:scaleX(0.939);-webkit-text-stroke-width:.1px;">Kosten:</span>
<span class="t" style="left:676.7px;top:308.89px;font-size:7.2px;line-height:8.64px;color:#f3f3f3;font-weight:400;transform:scaleX(0.987);-webkit-text-stroke-width:.1px;">Vorbereitung und Zeitrafferzeit:</span>
<span class="t" style="left:676.7px;top:318.82px;font-size:7.2px;line-height:8.64px;color:#f3f3f3;font-weight:400;transform:scaleX(0.967);-webkit-text-stroke-width:.1px;">Modelldruckzeit:</span>
<span class="t" style="left:676.7px;top:328.75px;font-size:7.2px;line-height:8.64px;color:#f3f3f3;font-weight:400;transform:scaleX(0.910);-webkit-text-stroke-width:.1px;">Gesamtzeit:</span>
<span class="t" style="left:769.8px;top:63.70px;font-size:7.2px;line-height:8.64px;color:#f3f3f3;font-weight:400;transform:scaleX(0.959);-webkit-text-stroke-width:.1px;">3m31s</span>
<span class="t" style="left:799.1px;top:63.70px;font-size:7.2px;line-height:8.64px;color:#f3f3f3;font-weight:400;transform:scaleX(0.959);-webkit-text-stroke-width:.1px;">8,4%</span>
<span class="t" style="left:831.6px;top:63.70px;font-size:7.2px;line-height:8.64px;color:#f3f3f3;font-weight:400;transform:scaleX(0.959);-webkit-text-stroke-width:.1px;">0,87 m</span>
<span class="t" style="left:856.8px;top:63.70px;font-size:7.2px;line-height:8.64px;color:#f3f3f3;font-weight:400;transform:scaleX(0.959);-webkit-text-stroke-width:.1px;">2,61 g</span>
<span class="t" style="left:769.8px;top:74.73px;font-size:7.2px;line-height:8.64px;color:#f3f3f3;font-weight:400;transform:scaleX(0.959);-webkit-text-stroke-width:.1px;">3m59s</span>
<span class="t" style="left:799.1px;top:74.73px;font-size:7.2px;line-height:8.64px;color:#f3f3f3;font-weight:400;transform:scaleX(0.959);-webkit-text-stroke-width:.1px;">9,4%</span>
<span class="t" style="left:831.6px;top:74.73px;font-size:7.2px;line-height:8.64px;color:#f3f3f3;font-weight:400;transform:scaleX(0.959);-webkit-text-stroke-width:.1px;">0,83 m</span>
<span class="t" style="left:856.8px;top:74.73px;font-size:7.2px;line-height:8.64px;color:#f3f3f3;font-weight:400;transform:scaleX(0.959);-webkit-text-stroke-width:.1px;">2,50 g</span>
<span class="t" style="left:769.8px;top:85.76px;font-size:7.2px;line-height:8.64px;color:#f3f3f3;font-weight:400;transform:scaleX(0.959);-webkit-text-stroke-width:.1px;">44s</span>
<span class="t" style="left:799.1px;top:85.76px;font-size:7.2px;line-height:8.64px;color:#f3f3f3;font-weight:400;transform:scaleX(0.959);-webkit-text-stroke-width:.1px;">1,8%</span>
<span class="t" style="left:831.6px;top:85.76px;font-size:7.2px;line-height:8.64px;color:#f3f3f3;font-weight:400;transform:scaleX(0.959);-webkit-text-stroke-width:.1px;">0,02 m</span>
<span class="t" style="left:856.8px;top:85.76px;font-size:7.2px;line-height:8.64px;color:#f3f3f3;font-weight:400;transform:scaleX(0.959);-webkit-text-stroke-width:.1px;">0,05 g</span>
<span class="t" style="left:769.8px;top:96.79px;font-size:7.2px;line-height:8.64px;color:#f3f3f3;font-weight:400;transform:scaleX(0.959);-webkit-text-stroke-width:.1px;">2s</span>
<span class="t" style="left:799.1px;top:96.79px;font-size:7.2px;line-height:8.64px;color:#f3f3f3;font-weight:400;transform:scaleX(0.959);-webkit-text-stroke-width:.1px;">0,1%</span>
<span class="t" style="left:831.6px;top:96.79px;font-size:7.2px;line-height:8.64px;color:#f3f3f3;font-weight:400;transform:scaleX(0.959);-webkit-text-stroke-width:.1px;">0,01 m</span>
<span class="t" style="left:856.8px;top:96.79px;font-size:7.2px;line-height:8.64px;color:#f3f3f3;font-weight:400;transform:scaleX(0.959);-webkit-text-stroke-width:.1px;">0,02 g</span>
<span class="t" style="left:769.8px;top:107.82px;font-size:7.2px;line-height:8.64px;color:#f3f3f3;font-weight:400;transform:scaleX(0.959);-webkit-text-stroke-width:.1px;">4m55s</span>
<span class="t" style="left:799.1px;top:107.82px;font-size:7.2px;line-height:8.64px;color:#f3f3f3;font-weight:400;transform:scaleX(0.959);-webkit-text-stroke-width:.1px;">11,7%</span>
<span class="t" style="left:831.6px;top:107.82px;font-size:7.2px;line-height:8.64px;color:#f3f3f3;font-weight:400;transform:scaleX(0.959);-webkit-text-stroke-width:.1px;">1,11 m</span>
<span class="t" style="left:856.8px;top:107.82px;font-size:7.2px;line-height:8.64px;color:#f3f3f3;font-weight:400;transform:scaleX(0.959);-webkit-text-stroke-width:.1px;">3,35 g</span>
<span class="t" style="left:769.8px;top:118.85px;font-size:7.2px;line-height:8.64px;color:#f3f3f3;font-weight:400;transform:scaleX(0.959);-webkit-text-stroke-width:.1px;">1m0s</span>
<span class="t" style="left:799.1px;top:118.85px;font-size:7.2px;line-height:8.64px;color:#f3f3f3;font-weight:400;transform:scaleX(0.959);-webkit-text-stroke-width:.1px;">2,4%</span>
<span class="t" style="left:831.6px;top:118.85px;font-size:7.2px;line-height:8.64px;color:#f3f3f3;font-weight:400;transform:scaleX(0.959);-webkit-text-stroke-width:.1px;">0,18 m</span>
<span class="t" style="left:856.8px;top:118.85px;font-size:7.2px;line-height:8.64px;color:#f3f3f3;font-weight:400;transform:scaleX(0.959);-webkit-text-stroke-width:.1px;">0,55 g</span>
<span class="t" style="left:769.8px;top:129.88px;font-size:7.2px;line-height:8.64px;color:#f3f3f3;font-weight:400;transform:scaleX(0.959);-webkit-text-stroke-width:.1px;">1s</span>
<span class="t" style="left:799.1px;top:129.88px;font-size:7.2px;line-height:8.64px;color:#f3f3f3;font-weight:400;transform:scaleX(0.959);-webkit-text-stroke-width:.1px;">&lt;0.1%</span>
<span class="t" style="left:831.6px;top:129.88px;font-size:7.2px;line-height:8.64px;color:#f3f3f3;font-weight:400;transform:scaleX(0.959);-webkit-text-stroke-width:.1px;">0,00 m</span>
<span class="t" style="left:856.8px;top:129.88px;font-size:7.2px;line-height:8.64px;color:#f3f3f3;font-weight:400;transform:scaleX(0.959);-webkit-text-stroke-width:.1px;">0,00 g</span>
<span class="t" style="left:769.8px;top:140.91px;font-size:7.2px;line-height:8.64px;color:#f3f3f3;font-weight:400;transform:scaleX(0.959);-webkit-text-stroke-width:.1px;">1m50s</span>
<span class="t" style="left:799.1px;top:140.91px;font-size:7.2px;line-height:8.64px;color:#f3f3f3;font-weight:400;transform:scaleX(0.959);-webkit-text-stroke-width:.1px;">4,3%</span>
<span class="t" style="left:831.6px;top:140.91px;font-size:7.2px;line-height:8.64px;color:#f3f3f3;font-weight:400;transform:scaleX(0.959);-webkit-text-stroke-width:.1px;">0,17 m</span>
<span class="t" style="left:856.8px;top:140.91px;font-size:7.2px;line-height:8.64px;color:#f3f3f3;font-weight:400;transform:scaleX(0.959);-webkit-text-stroke-width:.1px;">0,50 g</span>
<span class="t" style="left:769.8px;top:151.94px;font-size:7.2px;line-height:8.64px;color:#f3f3f3;font-weight:400;transform:scaleX(0.959);-webkit-text-stroke-width:.1px;">40s</span>
<span class="t" style="left:799.1px;top:151.94px;font-size:7.2px;line-height:8.64px;color:#f3f3f3;font-weight:400;transform:scaleX(0.959);-webkit-text-stroke-width:.1px;">1,6%</span>
<span class="t" style="left:831.6px;top:151.94px;font-size:7.2px;line-height:8.64px;color:#f3f3f3;font-weight:400;transform:scaleX(0.959);-webkit-text-stroke-width:.1px;">0,03 m</span>
<span class="t" style="left:856.8px;top:151.94px;font-size:7.2px;line-height:8.64px;color:#f3f3f3;font-weight:400;transform:scaleX(0.959);-webkit-text-stroke-width:.1px;">0,08 g</span>
<span class="t" style="left:769.8px;top:162.97px;font-size:7.2px;line-height:8.64px;color:#f3f3f3;font-weight:400;transform:scaleX(0.959);-webkit-text-stroke-width:.1px;">10s</span>
<span class="t" style="left:799.1px;top:162.97px;font-size:7.2px;line-height:8.64px;color:#f3f3f3;font-weight:400;transform:scaleX(0.959);-webkit-text-stroke-width:.1px;">0,4%</span>
<span class="t" style="left:831.6px;top:162.97px;font-size:7.2px;line-height:8.64px;color:#f3f3f3;font-weight:400;transform:scaleX(0.959);-webkit-text-stroke-width:.1px;">0,01 m</span>
<span class="t" style="left:856.8px;top:162.97px;font-size:7.2px;line-height:8.64px;color:#f3f3f3;font-weight:400;transform:scaleX(0.959);-webkit-text-stroke-width:.1px;">0,04 g</span>
<span class="t" style="left:769.8px;top:174.00px;font-size:7.2px;line-height:8.64px;color:#f3f3f3;font-weight:400;transform:scaleX(0.959);-webkit-text-stroke-width:.1px;">8m25s</span>
<span class="t" style="left:799.1px;top:174.00px;font-size:7.2px;line-height:8.64px;color:#f3f3f3;font-weight:400;transform:scaleX(0.959);-webkit-text-stroke-width:.1px;">19,9%</span>
<span class="t" style="left:831.6px;top:174.00px;font-size:7.2px;line-height:8.64px;color:#f3f3f3;font-weight:400;transform:scaleX(0.959);-webkit-text-stroke-width:.1px;">0,70 m</span>
<span class="t" style="left:856.8px;top:174.00px;font-size:7.2px;line-height:8.64px;color:#f3f3f3;font-weight:400;transform:scaleX(0.959);-webkit-text-stroke-width:.1px;">2,12 g</span>
<span class="t" style="left:769.8px;top:185.03px;font-size:7.2px;line-height:8.64px;color:#f3f3f3;font-weight:400;transform:scaleX(0.959);-webkit-text-stroke-width:.1px;">1m48s</span>
<span class="t" style="left:799.1px;top:185.03px;font-size:7.2px;line-height:8.64px;color:#f3f3f3;font-weight:400;transform:scaleX(0.959);-webkit-text-stroke-width:.1px;">4,3%</span>
<span class="t" style="left:831.6px;top:185.03px;font-size:7.2px;line-height:8.64px;color:#f3f3f3;font-weight:400;transform:scaleX(0.959);-webkit-text-stroke-width:.1px;">0,20 m</span>
<span class="t" style="left:856.8px;top:185.03px;font-size:7.2px;line-height:8.64px;color:#f3f3f3;font-weight:400;transform:scaleX(0.959);-webkit-text-stroke-width:.1px;">0,59 g</span>
<span class="t" style="left:769.8px;top:196.06px;font-size:7.2px;line-height:8.64px;color:#f3f3f3;font-weight:400;transform:scaleX(0.959);-webkit-text-stroke-width:.1px;">6m7s</span>
<span class="t" style="left:799.1px;top:196.06px;font-size:7.2px;line-height:8.64px;color:#f3f3f3;font-weight:400;transform:scaleX(0.959);-webkit-text-stroke-width:.1px;">14,5%</span>
<span class="t" style="left:831.6px;top:196.06px;font-size:7.2px;line-height:8.64px;color:#f3f3f3;font-weight:400;transform:scaleX(0.959);-webkit-text-stroke-width:.1px;">0,02 m</span>
<span class="t" style="left:856.8px;top:196.06px;font-size:7.2px;line-height:8.64px;color:#f3f3f3;font-weight:400;transform:scaleX(0.959);-webkit-text-stroke-width:.1px;">0,07 g</span>
<span class="t" style="left:769.8px;top:207.09px;font-size:7.2px;line-height:8.64px;color:#f3f3f3;font-weight:400;transform:scaleX(0.959);-webkit-text-stroke-width:.1px;">7m55s</span>
<span class="t" style="left:799.1px;top:207.09px;font-size:7.2px;line-height:8.64px;color:#f3f3f3;font-weight:400;transform:scaleX(0.959);-webkit-text-stroke-width:.1px;">18,7%</span>
<span class="t" style="left:777.2px;top:279.10px;font-size:7.2px;line-height:8.64px;color:#f3f3f3;font-weight:400;transform:scaleX(0.959);-webkit-text-stroke-width:.1px;">4,14 m</span>
<span class="t" style="left:806.4px;top:279.10px;font-size:7.2px;line-height:8.64px;color:#f3f3f3;font-weight:400;transform:scaleX(0.959);-webkit-text-stroke-width:.1px;">12,46 g</span>
<span class="t" style="left:777.2px;top:289.03px;font-size:7.2px;line-height:8.64px;color:#f3f3f3;font-weight:400;transform:scaleX(0.959);-webkit-text-stroke-width:.1px;">3,24 m</span>
<span class="t" style="left:806.4px;top:289.03px;font-size:7.2px;line-height:8.64px;color:#f3f3f3;font-weight:400;transform:scaleX(0.959);-webkit-text-stroke-width:.1px;">9,75 g</span>
<span class="t" style="left:777.2px;top:298.96px;font-size:7.2px;line-height:8.64px;color:#f3f3f3;font-weight:400;transform:scaleX(0.959);-webkit-text-stroke-width:.1px;">0,29</span>
<span class="t" style="left:777.2px;top:308.89px;font-size:7.2px;line-height:8.64px;color:#f3f3f3;font-weight:400;transform:scaleX(0.959);-webkit-text-stroke-width:.1px;">7m9s + 2m52s</span>
<span class="t" style="left:777.2px;top:318.82px;font-size:7.2px;line-height:8.64px;color:#f3f3f3;font-weight:400;transform:scaleX(0.959);-webkit-text-stroke-width:.1px;">32m12s</span>
<span class="t" style="left:777.2px;top:328.75px;font-size:7.2px;line-height:8.64px;color:#f3f3f3;font-weight:400;transform:scaleX(0.959);-webkit-text-stroke-width:.1px;">42m14s</span>
</div>
</body></html>
